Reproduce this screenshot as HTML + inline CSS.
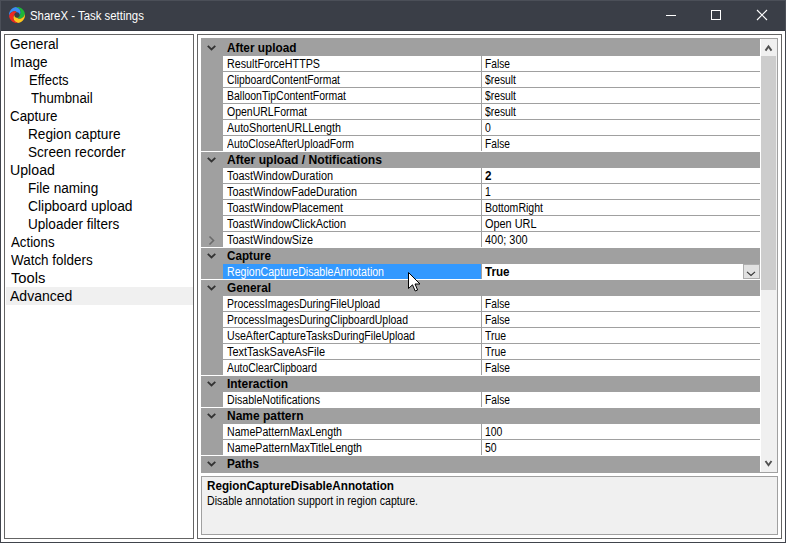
<!DOCTYPE html>
<html><head><meta charset="utf-8">
<style>
html,body{margin:0;padding:0;}
body{width:786px;height:543px;position:relative;overflow:hidden;background:#fff;font-family:"Liberation Sans",sans-serif;}
.abs{position:absolute;}
#title{position:absolute;left:0;top:0;width:786px;height:31px;background:#3a3e47;}
#wl{position:absolute;left:0;top:31px;width:1px;height:512px;background:#40444c;}
#wr{position:absolute;left:785px;top:31px;width:1px;height:512px;background:#40444c;}
#wb{position:absolute;left:0;top:542px;width:786px;height:1px;background:#40444c;}
#ttext{position:absolute;left:30px;top:9px;transform:scaleX(0.95);font-size:12px;line-height:15px;color:#fff;white-space:pre;transform-origin:0 0;}
#tree{position:absolute;left:4px;top:34px;width:188px;height:503px;border:1px solid #646464;background:#fff;}
.ti{position:absolute;left:6px;font-size:14px;transform-origin:0 0;line-height:18px;height:18px;color:#000;white-space:pre;}
#treesel{position:absolute;left:6px;top:287px;width:187px;height:18px;background:#f0f0f0;}
#pg{position:absolute;left:197px;top:34px;width:583px;height:503px;border:1px solid #646464;background:#fff;}
#grid{position:absolute;left:201px;top:38px;width:577px;height:435px;background:#a0a0a0;}
.cat{position:absolute;left:201px;width:559px;height:16px;background:#a0a0a0;}
.rowbg{position:absolute;left:223px;width:537px;height:15px;background:#fff;}
.sel{position:absolute;left:223px;width:258px;height:15px;background:#3399ff;}
.chev{position:absolute;}
.ctext,.ntext,.vtext{position:absolute;font-size:12px;line-height:16px;height:16px;white-space:pre;color:#000;transform-origin:0 0;}
.ctext,.bold{font-weight:bold;}
.white{color:#fff;}
.dd{position:absolute;left:743px;width:15px;height:13px;border:1px solid #adadad;background:#e1e1e1;}
.dd svg{position:absolute;left:0;top:0;}
#sep{position:absolute;left:481px;top:56px;width:1px;height:400px;}
#sb{position:absolute;left:761px;top:39px;width:16px;height:433px;background:#f0f0f0;border-left:1px solid #fff;margin-left:-1px;}
#thumb{position:absolute;left:761px;top:56px;width:15px;height:234px;background:#cdcdcd;}
#help{position:absolute;left:201px;top:476px;width:575px;height:57px;border:1px solid #a0a0a0;background:#f0f0f0;}
.htext{position:absolute;font-size:12px;line-height:15px;white-space:pre;color:#000;transform-origin:0 0;}
</style></head><body>
<div id="title"></div>
<div id="wl"></div><div id="wr"></div><div id="wb"></div>
<div class="abs" style="left:0;top:0;width:786px;height:1px;background:#4b4f58"></div>
<div class="abs" style="left:0;top:0;width:1px;height:31px;background:#4b4f58"></div>
<div class="abs" style="left:785px;top:0;width:1px;height:31px;background:#4b4f58"></div>
<div class="abs" style="left:1px;top:30px;width:784px;height:1px;background:#343840"></div>
<svg class="abs" style="left:9px;top:7px" width="16" height="16" viewBox="0 0 16 16"><path d="M0.06 8.97 L0.00 7.93 L0.08 6.89 L0.29 5.86 L0.64 4.87 L1.11 3.94 L1.70 3.07 L2.39 2.29 L3.19 1.61 L4.06 1.04 L5.00 0.58 L6.00 0.25 L7.03 0.06 L7.03 0.06 L8.12 0.44 L9.09 0.97 L9.92 1.61 L10.60 2.34 L11.12 3.12 L11.47 3.93 L11.67 4.74 L11.72 5.52 L11.63 6.25 L11.41 6.90 L11.09 7.46 L10.70 7.91 L10.70 7.91 L10.66 7.55 L10.58 7.21 L10.46 6.88 L10.29 6.57 L10.08 6.28 L9.84 6.03 L9.57 5.80 L9.27 5.62 L8.95 5.47 L8.61 5.37 L8.26 5.31 L7.91 5.30 L7.91 5.30 L7.46 4.91 L6.90 4.59 L6.25 4.37 L5.52 4.28 L4.74 4.33 L3.93 4.53 L3.12 4.88 L2.34 5.40 L1.61 6.08 L0.97 6.91 L0.44 7.88 L0.06 8.97Z" fill="#3b8cf2"/>
<path d="M7.03 0.06 L8.07 0.00 L9.11 0.08 L10.14 0.29 L11.13 0.64 L12.06 1.11 L12.93 1.70 L13.71 2.39 L14.39 3.19 L14.96 4.06 L15.42 5.00 L15.75 6.00 L15.94 7.03 L15.94 7.03 L15.56 8.12 L15.03 9.09 L14.39 9.92 L13.66 10.60 L12.88 11.12 L12.07 11.47 L11.26 11.67 L10.48 11.72 L9.75 11.63 L9.10 11.41 L8.54 11.09 L8.09 10.70 L8.09 10.70 L8.45 10.66 L8.79 10.58 L9.12 10.46 L9.43 10.29 L9.72 10.08 L9.97 9.84 L10.20 9.57 L10.38 9.27 L10.53 8.95 L10.63 8.61 L10.69 8.26 L10.70 7.91 L10.70 7.91 L11.09 7.46 L11.41 6.90 L11.63 6.25 L11.72 5.52 L11.67 4.74 L11.47 3.93 L11.12 3.12 L10.60 2.34 L9.92 1.61 L9.09 0.97 L8.12 0.44 L7.03 0.06Z" fill="#1db43a"/>
<path d="M15.94 7.03 L16.00 8.07 L15.92 9.11 L15.71 10.14 L15.36 11.13 L14.89 12.06 L14.30 12.93 L13.61 13.71 L12.81 14.39 L11.94 14.96 L11.00 15.42 L10.00 15.75 L8.97 15.94 L8.97 15.94 L7.88 15.56 L6.91 15.03 L6.08 14.39 L5.40 13.66 L4.88 12.88 L4.53 12.07 L4.33 11.26 L4.28 10.48 L4.37 9.75 L4.59 9.10 L4.91 8.54 L5.30 8.09 L5.30 8.09 L5.34 8.45 L5.42 8.79 L5.54 9.12 L5.71 9.43 L5.92 9.72 L6.16 9.97 L6.43 10.20 L6.73 10.38 L7.05 10.53 L7.39 10.63 L7.74 10.69 L8.09 10.70 L8.09 10.70 L8.54 11.09 L9.10 11.41 L9.75 11.63 L10.48 11.72 L11.26 11.67 L12.07 11.47 L12.88 11.12 L13.66 10.60 L14.39 9.92 L15.03 9.09 L15.56 8.12 L15.94 7.03Z" fill="#ffc61c"/>
<path d="M8.97 15.94 L7.93 16.00 L6.89 15.92 L5.86 15.71 L4.87 15.36 L3.94 14.89 L3.07 14.30 L2.29 13.61 L1.61 12.81 L1.04 11.94 L0.58 11.00 L0.25 10.00 L0.06 8.97 L0.06 8.97 L0.44 7.88 L0.97 6.91 L1.61 6.08 L2.34 5.40 L3.12 4.88 L3.93 4.53 L4.74 4.33 L5.52 4.28 L6.25 4.37 L6.90 4.59 L7.46 4.91 L7.91 5.30 L7.91 5.30 L7.55 5.34 L7.21 5.42 L6.88 5.54 L6.57 5.71 L6.28 5.92 L6.03 6.16 L5.80 6.43 L5.62 6.73 L5.47 7.05 L5.37 7.39 L5.31 7.74 L5.30 8.09 L5.30 8.09 L4.91 8.54 L4.59 9.10 L4.37 9.75 L4.28 10.48 L4.33 11.26 L4.53 12.07 L4.88 12.88 L5.40 13.66 L6.08 14.39 L6.91 15.03 L7.88 15.56 L8.97 15.94Z" fill="#ee2a22"/>
</svg>
<div id="ttext">ShareX - Task settings</div>
<svg class="abs" style="left:660px;top:0" width="126" height="31" viewBox="0 0 126 31">
  <rect x="6" y="15" width="10" height="1" fill="#fff"/>
  <rect x="51.5" y="10.5" width="9" height="9" fill="none" stroke="#fff" stroke-width="1"/>
  <path d="M97 10 L107 20 M107 10 L97 20" stroke="#fff" stroke-width="1.1"/>
</svg>
<div id="tree"></div>
<div id="treesel"></div>
<div class="ti" style="left:10.13px;top:35px;transform:scaleX(0.9751)">General</div>
<div class="ti" style="left:9.54px;top:53px;transform:scaleX(0.9679)">Image</div>
<div class="ti" style="left:28.87px;top:71px;transform:scaleX(0.9294)">Effects</div>
<div class="ti" style="left:30.80px;top:89px;transform:scaleX(0.9431)">Thumbnail</div>
<div class="ti" style="left:9.55px;top:107px;transform:scaleX(0.9543)">Capture</div>
<div class="ti" style="left:27.93px;top:125px;transform:scaleX(0.9745)">Region capture</div>
<div class="ti" style="left:27.93px;top:143px;transform:scaleX(0.9707)">Screen recorder</div>
<div class="ti" style="left:10.08px;top:161px;transform:scaleX(1.0118)">Upload</div>
<div class="ti" style="left:27.93px;top:179px;transform:scaleX(0.9705)">File naming</div>
<div class="ti" style="left:27.91px;top:197px;transform:scaleX(0.9875)">Clipboard upload</div>
<div class="ti" style="left:27.93px;top:215px;transform:scaleX(0.9689)">Uploader filters</div>
<div class="ti" style="left:10.60px;top:233px;transform:scaleX(0.9479)">Actions</div>
<div class="ti" style="left:10.60px;top:251px;transform:scaleX(0.9600)">Watch folders</div>
<div class="ti" style="left:10.60px;top:269px;transform:scaleX(1.0532)">Tools</div>
<div class="ti" style="left:9.70px;top:287px;transform:scaleX(1.0017)">Advanced</div>
<div id="pg"></div>
<div id="grid"></div>
<div class="cat" style="top:40px"></div>
<svg class="chev" style="left:206px;top:44px" width="12" height="8" viewBox="0 0 12 8"><path d="M1.8 1.8 L5.5 5.5 L9.3 1.8" fill="none" stroke="#333" stroke-width="1.8"/></svg>
<div class="ctext bold" style="transform:scaleX(0.9820);left:227px;top:40px;">After upload</div>
<div class="rowbg" style="top:56px"></div>
<div class="ntext" style="transform:scaleX(0.8940);left:227px;top:56px;width:auto;">ResultForceHTTPS</div>
<div class="vtext" style="transform:scaleX(0.8520);left:485px;top:56px;">False</div>
<div class="rowbg" style="top:72px"></div>
<div class="ntext" style="transform:scaleX(0.8599);left:227px;top:72px;width:auto;">ClipboardContentFormat</div>
<div class="vtext" style="transform:scaleX(0.8604);left:485px;top:72px;">$result</div>
<div class="rowbg" style="top:88px"></div>
<div class="ntext" style="transform:scaleX(0.8731);left:227px;top:88px;width:auto;">BalloonTipContentFormat</div>
<div class="vtext" style="transform:scaleX(0.8604);left:485px;top:88px;">$result</div>
<div class="rowbg" style="top:104px"></div>
<div class="ntext" style="transform:scaleX(0.8755);left:227px;top:104px;width:auto;">OpenURLFormat</div>
<div class="vtext" style="transform:scaleX(0.8604);left:485px;top:104px;">$result</div>
<div class="rowbg" style="top:120px"></div>
<div class="ntext" style="transform:scaleX(0.8946);left:227px;top:120px;width:auto;">AutoShortenURLLength</div>
<div class="vtext" style="transform:scaleX(0.8700);left:485px;top:120px;">0</div>
<div class="rowbg" style="top:136px"></div>
<div class="ntext" style="transform:scaleX(0.8655);left:227px;top:136px;width:auto;">AutoCloseAfterUploadForm</div>
<div class="vtext" style="transform:scaleX(0.8520);left:485px;top:136px;">False</div>
<div class="abs" style="left:201px;top:151px;width:559px;height:1px;background:#fff"></div>
<div class="cat" style="top:152px"></div>
<svg class="chev" style="left:206px;top:156px" width="12" height="8" viewBox="0 0 12 8"><path d="M1.8 1.8 L5.5 5.5 L9.3 1.8" fill="none" stroke="#333" stroke-width="1.8"/></svg>
<div class="ctext bold" style="transform:scaleX(1.0108);left:227px;top:152px;">After upload / Notifications</div>
<div class="rowbg" style="top:168px"></div>
<div class="ntext" style="transform:scaleX(0.9082);left:227px;top:168px;width:auto;">ToastWindowDuration</div>
<div class="vtext bold" style="transform:scaleX(0.9700);left:485px;top:168px;">2</div>
<div class="rowbg" style="top:184px"></div>
<div class="ntext" style="transform:scaleX(0.9023);left:227px;top:184px;width:auto;">ToastWindowFadeDuration</div>
<div class="vtext" style="transform:scaleX(0.8700);left:485px;top:184px;">1</div>
<div class="rowbg" style="top:200px"></div>
<div class="ntext" style="transform:scaleX(0.9058);left:227px;top:200px;width:auto;">ToastWindowPlacement</div>
<div class="vtext" style="transform:scaleX(0.8784);left:485px;top:200px;">BottomRight</div>
<div class="rowbg" style="top:216px"></div>
<div class="ntext" style="transform:scaleX(0.9104);left:227px;top:216px;width:auto;">ToastWindowClickAction</div>
<div class="vtext" style="transform:scaleX(0.9082);left:485px;top:216px;">Open URL</div>
<div class="rowbg" style="top:232px"></div>
<div class="ntext" style="transform:scaleX(0.9080);left:227px;top:232px;width:auto;">ToastWindowSize</div>
<div class="vtext" style="transform:scaleX(0.9118);left:485px;top:232px;">400; 300</div>
<svg class="chev" style="left:206px;top:235px" width="12" height="12" viewBox="0 0 12 12"><path d="M3.5 1.5 L7.5 5.5 L3.5 9.5" fill="none" stroke="#6a6a6a" stroke-width="1.6"/></svg>
<div class="abs" style="left:201px;top:247px;width:559px;height:1px;background:#fff"></div>
<div class="cat" style="top:248px"></div>
<svg class="chev" style="left:206px;top:252px" width="12" height="8" viewBox="0 0 12 8"><path d="M1.8 1.8 L5.5 5.5 L9.3 1.8" fill="none" stroke="#333" stroke-width="1.8"/></svg>
<div class="ctext bold" style="transform:scaleX(0.9704);left:227px;top:248px;">Capture</div>
<div class="rowbg" style="top:264px"></div>
<div class="sel" style="top:264px"></div>
<div class="ntext white" style="transform:scaleX(0.8814);left:227px;top:264px;width:auto;">RegionCaptureDisableAnnotation</div>
<div class="vtext bold" style="transform:scaleX(0.9700);left:485px;top:264px;">True</div>
<div class="dd" style="top:264px"><svg width="15" height="13" viewBox="0 0 15 13"><path d="M3 6.8 L7 10.5 L11 6.8" fill="none" stroke="#333" stroke-width="1.1"/></svg></div>
<div class="abs" style="left:201px;top:279px;width:559px;height:1px;background:#fff"></div>
<div class="cat" style="top:280px"></div>
<svg class="chev" style="left:206px;top:284px" width="12" height="8" viewBox="0 0 12 8"><path d="M1.8 1.8 L5.5 5.5 L9.3 1.8" fill="none" stroke="#333" stroke-width="1.8"/></svg>
<div class="ctext bold" style="transform:scaleX(0.9843);left:227px;top:280px;">General</div>
<div class="rowbg" style="top:296px"></div>
<div class="ntext" style="transform:scaleX(0.8722);left:227px;top:296px;width:auto;">ProcessImagesDuringFileUpload</div>
<div class="vtext" style="transform:scaleX(0.8520);left:485px;top:296px;">False</div>
<div class="rowbg" style="top:312px"></div>
<div class="ntext" style="transform:scaleX(0.8725);left:227px;top:312px;width:auto;">ProcessImagesDuringClipboardUpload</div>
<div class="vtext" style="transform:scaleX(0.8520);left:485px;top:312px;">False</div>
<div class="rowbg" style="top:328px"></div>
<div class="ntext" style="transform:scaleX(0.8836);left:227px;top:328px;width:auto;">UseAfterCaptureTasksDuringFileUpload</div>
<div class="vtext" style="transform:scaleX(0.8700);left:485px;top:328px;">True</div>
<div class="rowbg" style="top:344px"></div>
<div class="ntext" style="transform:scaleX(0.9127);left:227px;top:344px;width:auto;">TextTaskSaveAsFile</div>
<div class="vtext" style="transform:scaleX(0.8700);left:485px;top:344px;">True</div>
<div class="rowbg" style="top:360px"></div>
<div class="ntext" style="transform:scaleX(0.8593);left:227px;top:360px;width:auto;">AutoClearClipboard</div>
<div class="vtext" style="transform:scaleX(0.8520);left:485px;top:360px;">False</div>
<div class="abs" style="left:201px;top:375px;width:559px;height:1px;background:#fff"></div>
<div class="cat" style="top:376px"></div>
<svg class="chev" style="left:206px;top:380px" width="12" height="8" viewBox="0 0 12 8"><path d="M1.8 1.8 L5.5 5.5 L9.3 1.8" fill="none" stroke="#333" stroke-width="1.8"/></svg>
<div class="ctext bold" style="transform:scaleX(0.9944);left:227px;top:376px;">Interaction</div>
<div class="rowbg" style="top:392px"></div>
<div class="ntext" style="transform:scaleX(0.8824);left:227px;top:392px;width:auto;">DisableNotifications</div>
<div class="vtext" style="transform:scaleX(0.8520);left:485px;top:392px;">False</div>
<div class="abs" style="left:201px;top:407px;width:559px;height:1px;background:#fff"></div>
<div class="cat" style="top:408px"></div>
<svg class="chev" style="left:206px;top:412px" width="12" height="8" viewBox="0 0 12 8"><path d="M1.8 1.8 L5.5 5.5 L9.3 1.8" fill="none" stroke="#333" stroke-width="1.8"/></svg>
<div class="ctext bold" style="transform:scaleX(0.9976);left:227px;top:408px;">Name pattern</div>
<div class="rowbg" style="top:424px"></div>
<div class="ntext" style="transform:scaleX(0.8841);left:227px;top:424px;width:auto;">NamePatternMaxLength</div>
<div class="vtext" style="transform:scaleX(0.8700);left:485px;top:424px;">100</div>
<div class="rowbg" style="top:440px"></div>
<div class="ntext" style="transform:scaleX(0.8864);left:227px;top:440px;width:auto;">NamePatternMaxTitleLength</div>
<div class="vtext" style="transform:scaleX(0.8700);left:485px;top:440px;">50</div>
<div class="abs" style="left:201px;top:455px;width:559px;height:1px;background:#fff"></div>
<div class="cat" style="top:456px"></div>
<svg class="chev" style="left:206px;top:460px" width="12" height="8" viewBox="0 0 12 8"><path d="M1.8 1.8 L5.5 5.5 L9.3 1.8" fill="none" stroke="#333" stroke-width="1.8"/></svg>
<div class="ctext bold" style="transform:scaleX(0.9790);left:227px;top:456px;">Paths</div>
<div class="abs" style="left:481px;top:56px;width:1px;height:15px;background:#a0a0a0"></div>
<div class="abs" style="left:481px;top:72px;width:1px;height:15px;background:#a0a0a0"></div>
<div class="abs" style="left:481px;top:88px;width:1px;height:15px;background:#a0a0a0"></div>
<div class="abs" style="left:481px;top:104px;width:1px;height:15px;background:#a0a0a0"></div>
<div class="abs" style="left:481px;top:120px;width:1px;height:15px;background:#a0a0a0"></div>
<div class="abs" style="left:481px;top:136px;width:1px;height:15px;background:#a0a0a0"></div>
<div class="abs" style="left:481px;top:168px;width:1px;height:15px;background:#a0a0a0"></div>
<div class="abs" style="left:481px;top:184px;width:1px;height:15px;background:#a0a0a0"></div>
<div class="abs" style="left:481px;top:200px;width:1px;height:15px;background:#a0a0a0"></div>
<div class="abs" style="left:481px;top:216px;width:1px;height:15px;background:#a0a0a0"></div>
<div class="abs" style="left:481px;top:232px;width:1px;height:15px;background:#a0a0a0"></div>
<div class="abs" style="left:481px;top:264px;width:1px;height:15px;background:#a0a0a0"></div>
<div class="abs" style="left:481px;top:296px;width:1px;height:15px;background:#a0a0a0"></div>
<div class="abs" style="left:481px;top:312px;width:1px;height:15px;background:#a0a0a0"></div>
<div class="abs" style="left:481px;top:328px;width:1px;height:15px;background:#a0a0a0"></div>
<div class="abs" style="left:481px;top:344px;width:1px;height:15px;background:#a0a0a0"></div>
<div class="abs" style="left:481px;top:360px;width:1px;height:15px;background:#a0a0a0"></div>
<div class="abs" style="left:481px;top:392px;width:1px;height:15px;background:#a0a0a0"></div>
<div class="abs" style="left:481px;top:424px;width:1px;height:15px;background:#a0a0a0"></div>
<div class="abs" style="left:481px;top:440px;width:1px;height:15px;background:#a0a0a0"></div>
<div id="sb"></div>
<div id="thumb"></div>
<svg class="abs" style="left:761px;top:39px" width="16" height="17" viewBox="0 0 16 17"><path d="M4.5 11.6 L7.5 7.4 L10.5 11.6" fill="none" stroke="#505050" stroke-width="1.9"/></svg>
<svg class="abs" style="left:761px;top:456px" width="16" height="16" viewBox="0 0 16 16"><path d="M4.5 5.0 L7.5 9.2 L10.5 5.0" fill="none" stroke="#505050" stroke-width="1.9"/></svg>
<div id="help"></div>
<div class="htext bold" style="transform:scaleX(0.9739);left:207px;top:479px;">RegionCaptureDisableAnnotation</div>
<div class="htext" style="transform:scaleX(0.8835);left:207px;top:494px;">Disable annotation support in region capture.</div>
<svg class="abs" style="left:408px;top:272px" width="14" height="22" viewBox="0 0 14 22"><path d="M0.5 0.5 L0.5 16.5 L4.5 12.8 L7.2 19 L9.6 18 L7 12 L12 12 Z" fill="#fff" stroke="#000" stroke-width="1"/></svg>
</body></html>
